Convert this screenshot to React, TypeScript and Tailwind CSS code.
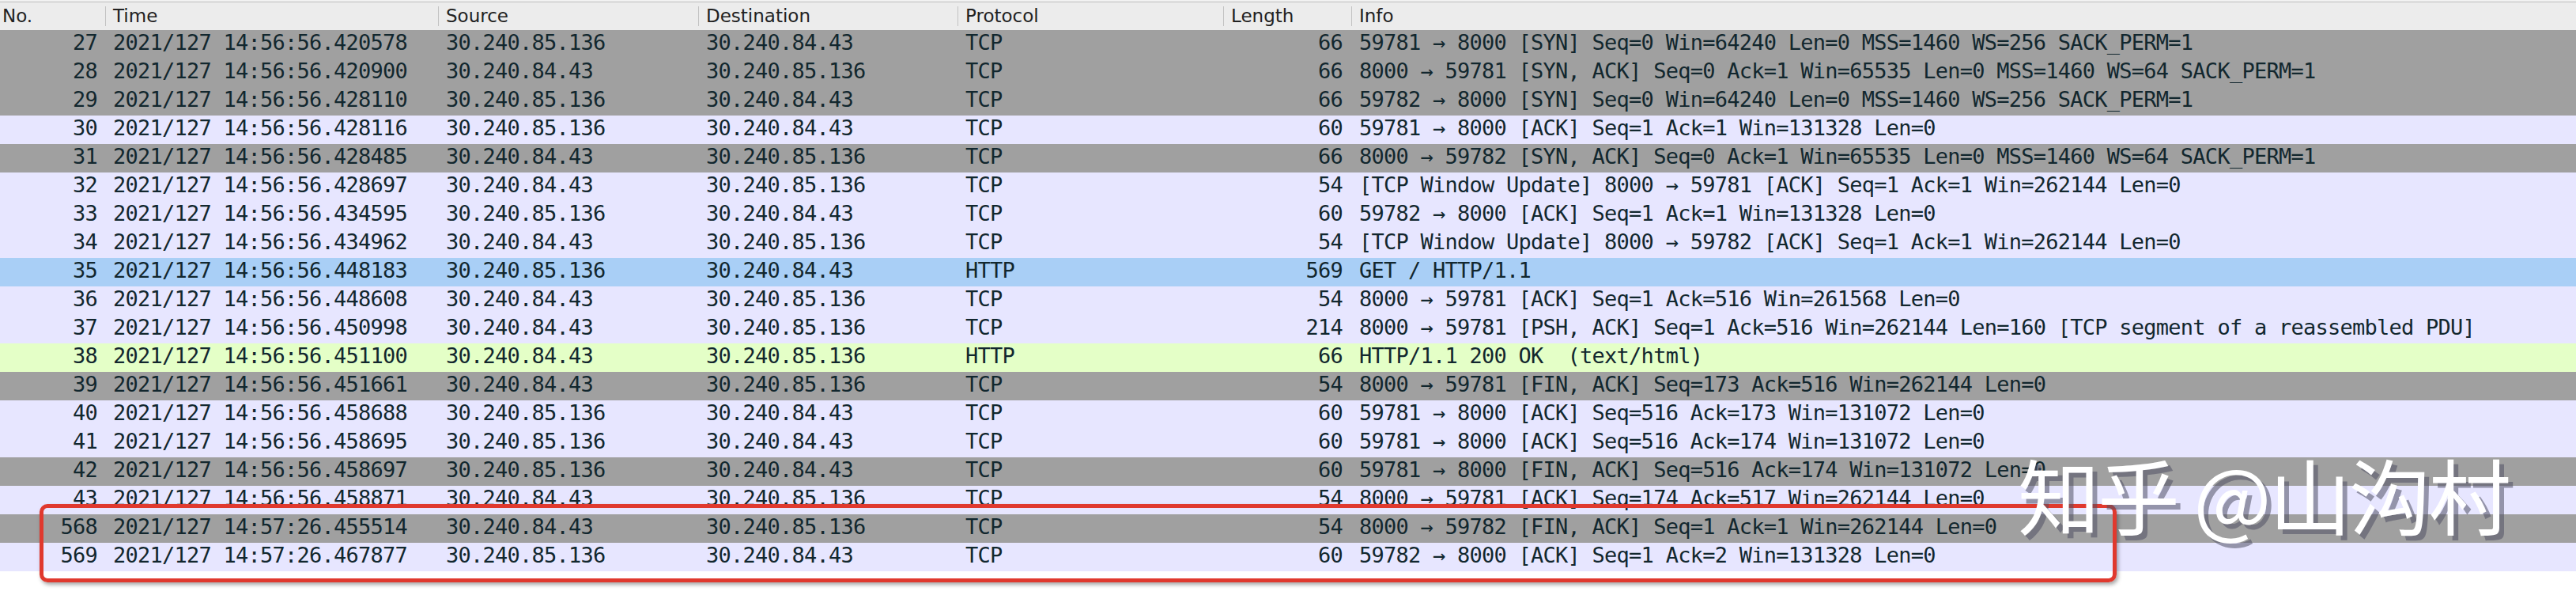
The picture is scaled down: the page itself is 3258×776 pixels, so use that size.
import React from 'react';

type Packet = {
  no: number;
  time: string;
  src: string;
  dst: string;
  proto: string;
  len: number;
  info: string;
  kind: 'gray' | 'tcp' | 'get' | 'http';
};

const A = '30.240.85.136';
const B = '30.240.84.43';

const packets: Packet[] = [
  { no: 27, time: '2021/127 14:56:56.420578', src: A, dst: B, proto: 'TCP', len: 66, info: '59781 → 8000 [SYN] Seq=0 Win=64240 Len=0 MSS=1460 WS=256 SACK_PERM=1', kind: 'gray' },
  { no: 28, time: '2021/127 14:56:56.420900', src: B, dst: A, proto: 'TCP', len: 66, info: '8000 → 59781 [SYN, ACK] Seq=0 Ack=1 Win=65535 Len=0 MSS=1460 WS=64 SACK_PERM=1', kind: 'gray' },
  { no: 29, time: '2021/127 14:56:56.428110', src: A, dst: B, proto: 'TCP', len: 66, info: '59782 → 8000 [SYN] Seq=0 Win=64240 Len=0 MSS=1460 WS=256 SACK_PERM=1', kind: 'gray' },
  { no: 30, time: '2021/127 14:56:56.428116', src: A, dst: B, proto: 'TCP', len: 60, info: '59781 → 8000 [ACK] Seq=1 Ack=1 Win=131328 Len=0', kind: 'tcp' },
  { no: 31, time: '2021/127 14:56:56.428485', src: B, dst: A, proto: 'TCP', len: 66, info: '8000 → 59782 [SYN, ACK] Seq=0 Ack=1 Win=65535 Len=0 MSS=1460 WS=64 SACK_PERM=1', kind: 'gray' },
  { no: 32, time: '2021/127 14:56:56.428697', src: B, dst: A, proto: 'TCP', len: 54, info: '[TCP Window Update] 8000 → 59781 [ACK] Seq=1 Ack=1 Win=262144 Len=0', kind: 'tcp' },
  { no: 33, time: '2021/127 14:56:56.434595', src: A, dst: B, proto: 'TCP', len: 60, info: '59782 → 8000 [ACK] Seq=1 Ack=1 Win=131328 Len=0', kind: 'tcp' },
  { no: 34, time: '2021/127 14:56:56.434962', src: B, dst: A, proto: 'TCP', len: 54, info: '[TCP Window Update] 8000 → 59782 [ACK] Seq=1 Ack=1 Win=262144 Len=0', kind: 'tcp' },
  { no: 35, time: '2021/127 14:56:56.448183', src: A, dst: B, proto: 'HTTP', len: 569, info: 'GET / HTTP/1.1', kind: 'get' },
  { no: 36, time: '2021/127 14:56:56.448608', src: B, dst: A, proto: 'TCP', len: 54, info: '8000 → 59781 [ACK] Seq=1 Ack=516 Win=261568 Len=0', kind: 'tcp' },
  { no: 37, time: '2021/127 14:56:56.450998', src: B, dst: A, proto: 'TCP', len: 214, info: '8000 → 59781 [PSH, ACK] Seq=1 Ack=516 Win=262144 Len=160 [TCP segment of a reassembled PDU]', kind: 'tcp' },
  { no: 38, time: '2021/127 14:56:56.451100', src: B, dst: A, proto: 'HTTP', len: 66, info: 'HTTP/1.1 200 OK  (text/html)', kind: 'http' },
  { no: 39, time: '2021/127 14:56:56.451661', src: B, dst: A, proto: 'TCP', len: 54, info: '8000 → 59781 [FIN, ACK] Seq=173 Ack=516 Win=262144 Len=0', kind: 'gray' },
  { no: 40, time: '2021/127 14:56:56.458688', src: A, dst: B, proto: 'TCP', len: 60, info: '59781 → 8000 [ACK] Seq=516 Ack=173 Win=131072 Len=0', kind: 'tcp' },
  { no: 41, time: '2021/127 14:56:56.458695', src: A, dst: B, proto: 'TCP', len: 60, info: '59781 → 8000 [ACK] Seq=516 Ack=174 Win=131072 Len=0', kind: 'tcp' },
  { no: 42, time: '2021/127 14:56:56.458697', src: A, dst: B, proto: 'TCP', len: 60, info: '59781 → 8000 [FIN, ACK] Seq=516 Ack=174 Win=131072 Len=0', kind: 'gray' },
  { no: 43, time: '2021/127 14:56:56.458871', src: B, dst: A, proto: 'TCP', len: 54, info: '8000 → 59781 [ACK] Seq=174 Ack=517 Win=262144 Len=0', kind: 'tcp' },
  { no: 568, time: '2021/127 14:57:26.455514', src: B, dst: A, proto: 'TCP', len: 54, info: '8000 → 59782 [FIN, ACK] Seq=1 Ack=1 Win=262144 Len=0', kind: 'gray' },
  { no: 569, time: '2021/127 14:57:26.467877', src: A, dst: B, proto: 'TCP', len: 60, info: '59782 → 8000 [ACK] Seq=1 Ack=2 Win=131328 Len=0', kind: 'tcp' },
];

const rowBg: Record<Packet['kind'], string> = {
  gray: 'bg-[#a0a0a0]',
  tcp: 'bg-[#e7e6ff]',
  get: 'bg-[#a9cff6]',
  http: 'bg-[#e4ffc7]',
};

const cols = 'grid grid-cols-[133px_421px_329px_328px_336px_162px_1fr]';

const HeaderCell: React.FC<{ label: string; first?: boolean }> = ({ label, first }) => (
  <div className="flex items-center h-full overflow-hidden">
    {!first && <span className="w-px h-[25px] bg-[#c2c2c2] shrink-0" />}
    <span className={first ? 'pl-[3px]' : 'pl-[9px]'}>{label}</span>
  </div>
);

export default function App() {
  return (
    <div className="relative w-[3258px] h-[776px] overflow-hidden bg-white">
      {/* column header */}
      <div className="pt-[2px] bg-[#f2f2f2]">
        <div
          className={`${cols} h-[36px] bg-[#ececec] border-t border-[#bcbcbc] text-[23px] text-[#222]`}
          style={{ fontFamily: '"DejaVu Sans", "Noto Sans", sans-serif' }}
        >
          <HeaderCell label="No." first />
          <HeaderCell label="Time" />
          <HeaderCell label="Source" />
          <HeaderCell label="Destination" />
          <HeaderCell label="Protocol" />
          <HeaderCell label="Length" />
          <HeaderCell label="Info" />
        </div>
      </div>

      {/* packet list */}
      <div
        className="text-[27px] tracking-[-0.75px] text-[#12272e] whitespace-pre"
        style={{ fontFamily: '"DejaVu Sans Mono", "Liberation Mono", monospace' }}
      >
        {packets.map((p) => (
          <div key={p.no} className={`${cols} h-[36px] leading-[32px] ${rowBg[p.kind]}`}>
            <div className="text-right pr-[10px]">{p.no}</div>
            <div className="pl-[10px]">{p.time}</div>
            <div className="pl-[10px]">{p.src}</div>
            <div className="pl-[10px]">{p.dst}</div>
            <div className="pl-[10px]">{p.proto}</div>
            <div className="text-right pr-[11px]">{p.len}</div>
            <div className="pl-[10px] overflow-hidden">{p.info}</div>
          </div>
        ))}
      </div>

      {/* red highlight box */}
      <div className="absolute left-[50px] top-[637px] w-[2627px] h-[99px] border-[5px] border-[#e0392e] rounded-[10px] shadow-[2px_3px_5px_rgba(0,0,0,0.35)]" />

      {/* watermark */}
      <div
        className="absolute left-[2552px] top-[572px] text-[104px] leading-none tracking-[-3px] text-white whitespace-pre [text-shadow:6px_6px_0_rgba(80,80,100,0.55)]"
        style={{ fontFamily: '"Noto Sans CJK SC", "Noto Sans", sans-serif' }}
      >
        知乎 @山沟村
      </div>
    </div>
  );
}
